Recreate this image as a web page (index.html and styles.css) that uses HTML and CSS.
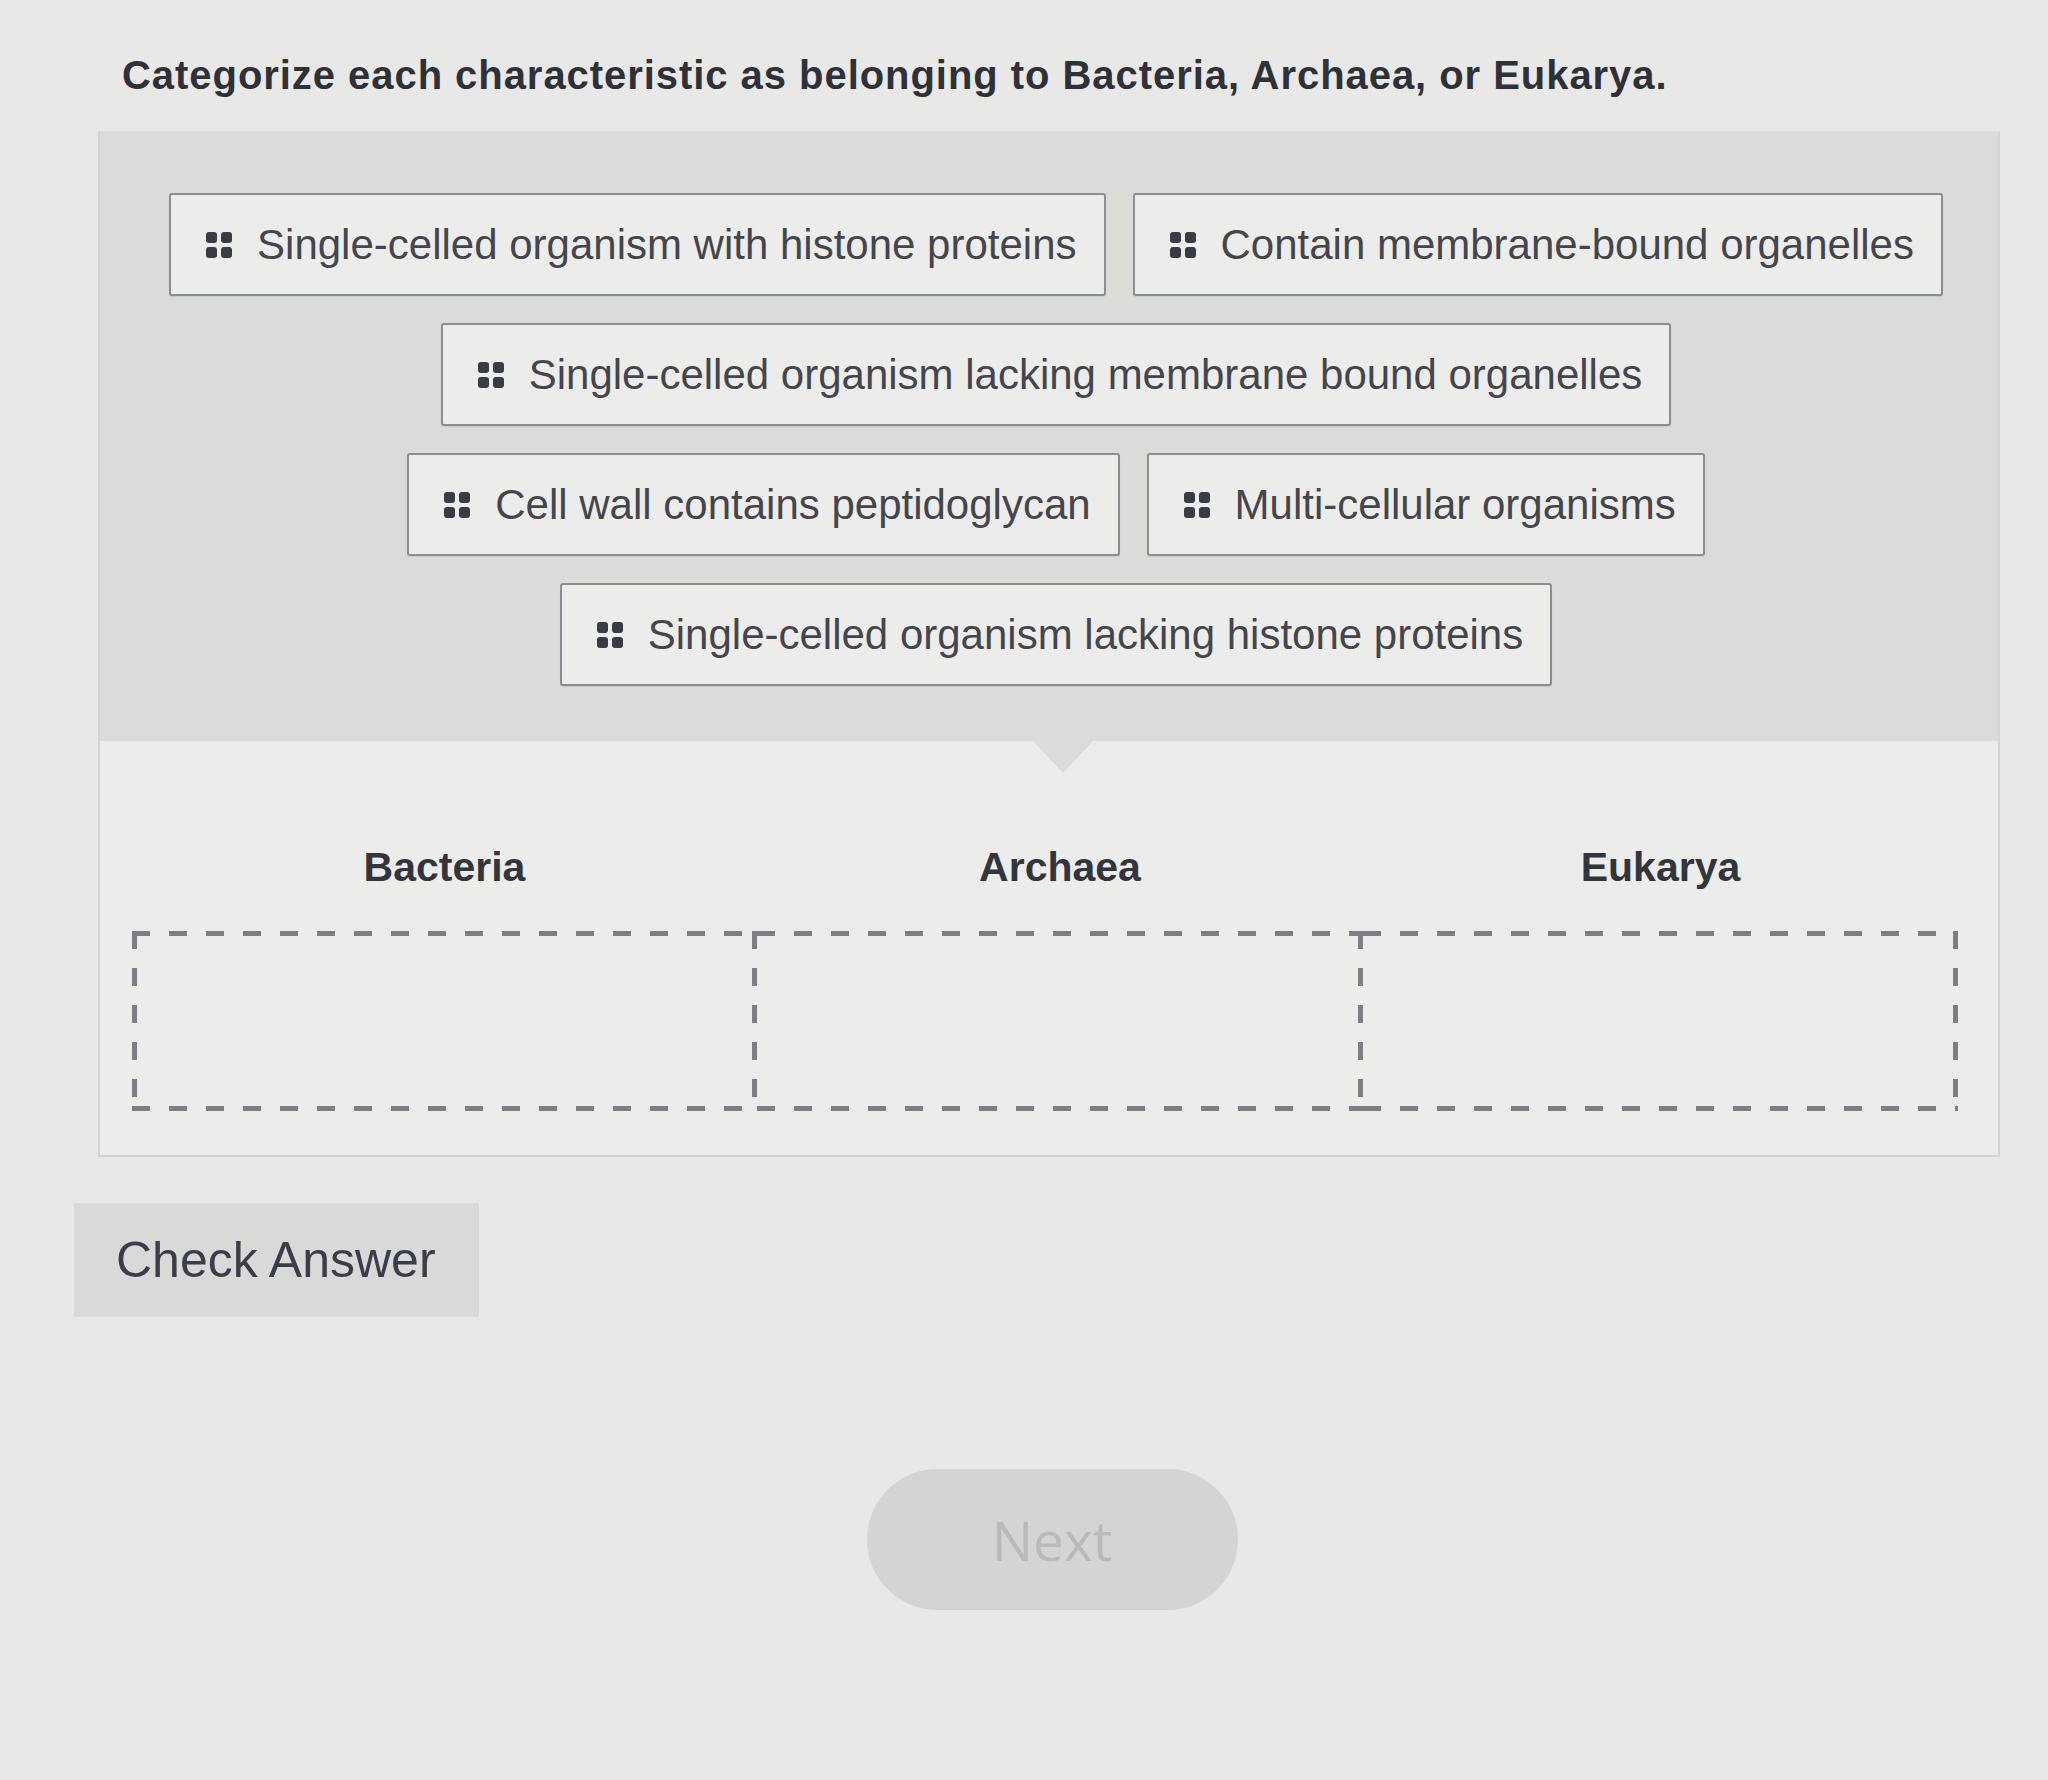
FILE: index.html
```html
<!DOCTYPE html>
<html lang="en">
<head>
<meta charset="utf-8">
<title>Categorize</title>
<link rel="stylesheet" href="styles.css">
</head>
<body>
<main class="page">
  <h1 class="title">Categorize each characteristic as belonging to Bacteria, Archaea, or Eukarya.</h1>
  <section class="card">
    <div class="pool">
      <div class="row">
        <div class="item"><span class="grip"><i></i><i></i><i></i><i></i></span><span class="label">Single-celled organism with histone proteins</span></div>
        <div class="item"><span class="grip"><i></i><i></i><i></i><i></i></span><span class="label">Contain membrane-bound organelles</span></div>
      </div>
      <div class="row">
        <div class="item"><span class="grip"><i></i><i></i><i></i><i></i></span><span class="label">Single-celled organism lacking membrane bound organelles</span></div>
      </div>
      <div class="row">
        <div class="item"><span class="grip"><i></i><i></i><i></i><i></i></span><span class="label">Cell wall contains peptidoglycan</span></div>
        <div class="item"><span class="grip"><i></i><i></i><i></i><i></i></span><span class="label">Multi-cellular organisms</span></div>
      </div>
      <div class="row">
        <div class="item"><span class="grip"><i></i><i></i><i></i><i></i></span><span class="label">Single-celled organism lacking histone proteins</span></div>
      </div>
    </div>
    <div class="targets">
      <div class="heads">
        <h2 class="head">Bacteria</h2>
        <h2 class="head">Archaea</h2>
        <h2 class="head">Eukarya</h2>
      </div>
      <div class="zones">
        <div class="zone zone-first"></div>
        <div class="zone"></div>
        <div class="zone"></div>
      </div>
    </div>
  </section>
  <button class="check" type="button">Check Answer</button>
  <div class="next-wrap"><button class="next" type="button">Next</button></div>
</main>
</body>
</html>
```
FILE: styles.css
```css
html, body {
  margin: 0;
  padding: 0;
}
body {
  background: #e8e9e7;
  width: 2048px;
  height: 1780px;
  overflow: hidden;
  font-family: "Liberation Sans", Arial, sans-serif;
}
.page {
  padding-top: 51px;
}
.title {
  margin: 0 0 32px 122px;
  font-size: 40px;
  line-height: 48px;
  font-weight: 700;
  letter-spacing: 0.95px;
  color: #2f3138;
}
.card {
  margin-left: 98px;
  width: 1902px;
  box-sizing: border-box;
  border: 2px solid #d2d4d2;
  border-top: none;
  background: #ecedeb;
}
.pool {
  position: relative;
  background: #dadcda;
  padding: 62px 0 55px 14px;
  display: flex;
  flex-direction: column;
  gap: 27px;
}
.pool::after {
  content: "";
  position: absolute;
  left: calc(50% - 16px);
  bottom: -32px;
  border-top: 32px solid #dadcda;
  border-left: 30px solid transparent;
  border-right: 30px solid transparent;
}
.row {
  display: flex;
  justify-content: center;
  gap: 27px;
}
.item {
  height: 103px;
  box-sizing: border-box;
  display: flex;
  align-items: center;
  gap: 25px;
  padding: 0 27px 0 35px;
  background: #ecedeb;
  border: 2px solid #8a8d92;
  border-radius: 3px;
  box-shadow: 0 1px 1px rgba(0,0,0,0.08);
}
.grip {
  display: grid;
  grid-template-columns: 11px 11px;
  grid-template-rows: 11px 11px;
  gap: 4px;
  flex: none;
}
.grip i {
  display: block;
  background: #3a3c44;
  border-radius: 3px;
}
.label {
  font-size: 42px;
  line-height: 48px;
  color: #44464c;
  white-space: nowrap;
}
.targets {
  padding: 102px 40px 44px 32px;
}
.heads {
  display: grid;
  grid-template-columns: 625px 606px 1fr;
  margin-bottom: 40px;
}
.head {
  margin: 0;
  text-align: center;
  font-size: 41px;
  line-height: 48px;
  font-weight: 700;
  color: #33353d;
}
.zones {
  display: grid;
  grid-template-columns: 625px 606px 1fr;
  height: 180px;
}
.zone {
  --c: #7d7f85;
  background:
    linear-gradient(to right, var(--c) 50%, transparent 50%) left top / 37px 5px repeat-x,
    linear-gradient(to right, var(--c) 50%, transparent 50%) left bottom / 37px 5px repeat-x,
    linear-gradient(to bottom, var(--c) 50%, transparent 50%) right top / 5px 37px repeat-y;
}
.zone-first {
  background:
    linear-gradient(to right, var(--c) 50%, transparent 50%) left top / 37px 5px repeat-x,
    linear-gradient(to right, var(--c) 50%, transparent 50%) left bottom / 37px 5px repeat-x,
    linear-gradient(to bottom, var(--c) 50%, transparent 50%) right top / 5px 37px repeat-y,
    linear-gradient(to bottom, var(--c) 50%, transparent 50%) left top / 5px 37px repeat-y;
}
.check {
  display: block;
  margin: 46px 0 0 74px;
  width: 405px;
  height: 114px;
  border: none;
  border-radius: 2px;
  background: #d8dad8;
  font-family: "Liberation Sans", Arial, sans-serif;
  font-size: 50px;
  color: #3b3d4a;
  padding: 0 0 0 4px;
  text-align: left;
  text-indent: 38px;
}
.next-wrap {
  display: flex;
  justify-content: center;
  padding-left: 56px;
  margin-top: 152px;
}
.next {
  width: 371px;
  height: 141px;
  border: none;
  border-radius: 71px;
  background: #d3d5d3;
  font-family: "Open Sans", sans-serif;
  font-size: 55px;
  color: #b9bbba;
  padding: 0;
}
```
